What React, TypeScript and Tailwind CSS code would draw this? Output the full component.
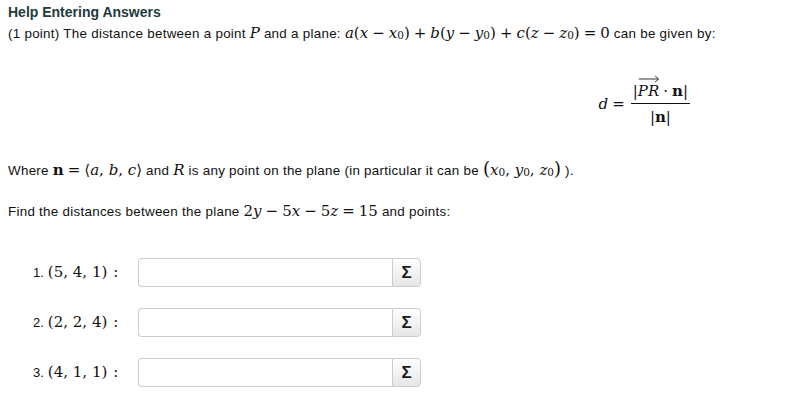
import React from "react";

const mathFont = { fontFamily: '"DejaVu Serif", "Liberation Serif", serif' } as const;

function V({ children }: { children: React.ReactNode }) {
  return <span className="italic">{children}</span>;
}

function M({ children }: { children: React.ReactNode }) {
  return (
    <span className="text-[15px] whitespace-nowrap tracking-normal" style={mathFont}>
      {children}
    </span>
  );
}

function Sub0() {
  return <sub className="text-[10.5px] not-italic relative top-[1px]">0</sub>;
}

function Op({ children }: { children: React.ReactNode }) {
  return <span className="mx-[4px]">{children}</span>;
}

function AnswerRow({ n, point }: { n: number; point: string }) {
  return (
    <div className="flex items-center">
      <div className="w-[130px] pl-[25px] flex items-center gap-[4px]">
        <span className="text-[13px]">{n}.</span>
        <M>
          ({point})<span className="ml-[6px]">:</span>
        </M>
      </div>
      <div className="flex w-[283px] h-[29px]">
        <input
          type="text"
          className="flex-1 min-w-0 h-full border border-[#cccccc] border-r-0 rounded-l-[4px] bg-white outline-none px-2 text-[13px]"
        />
        <button className="w-[29px] h-full border border-[#cccccc] rounded-r-[4px] bg-gradient-to-b from-[#ffffff] to-[#e6e6e6] flex items-center justify-center text-[17px] font-bold text-[#1a1a1a] leading-none">
          Σ
        </button>
      </div>
    </div>
  );
}

export default function App() {
  return (
    <div
      className="w-[790px] h-[405px] bg-white text-[#111] px-[8px] pt-[3px]"
      style={{ fontFamily: '"Liberation Sans", Arial, sans-serif' }}
    >
      <h1 className="text-[14px] font-bold text-[#1e3a3b] leading-[18px]">Help Entering Answers</h1>
      <p className="text-[13.4px] tracking-[0.27px] leading-[22px] mt-[1px]">
        (1 point) The distance between a point{" "}
        <M>
          <V>P</V>
        </M>{" "}
        and a plane:{" "}
        <M>
          <V>a</V>(<V>x</V>
          <Op>−</Op>
          <V>x</V>
          <Sub0 />)<Op>+</Op>
          <V>b</V>(<V>y</V>
          <Op>−</Op>
          <V>y</V>
          <Sub0 />)<Op>+</Op>
          <V>c</V>(<V>z</V>
          <Op>−</Op>
          <V>z</V>
          <Sub0 />)<Op>=</Op>0
        </M>{" "}
        can be given by:
      </p>

      <div className="flex justify-end pr-[92px] mt-[36px]">
        <div className="flex items-center text-[15px]" style={mathFont}>
          <V>d</V>
          <span className="ml-[4px] mr-[6px]">=</span>
          <div className="flex flex-col items-center">
            <div className="px-[2px] flex items-end leading-[20px]">
              <span>|</span>
              <span className="relative inline-block">
                <svg
                  className="absolute left-0 top-[-6px]"
                  width="100%"
                  height="8"
                  viewBox="0 0 30 8"
                  preserveAspectRatio="none"
                >
                  <path d="M1 4 H28" stroke="#111" strokeWidth="1" fill="none" />
                  <path d="M24 1 L29 4 L24 7" stroke="#111" strokeWidth="1" fill="none" />
                </svg>
                <V>PR</V>
              </span>
              <span className="mx-[4px]">·</span>
              <span className="font-bold">n</span>
              <span>|</span>
            </div>
            <div className="w-full h-[1px] bg-[#111] mt-[2px] mb-[3px]" />
            <div className="leading-[20px]">
              |<span className="font-bold">n</span>|
            </div>
          </div>
        </div>
      </div>

      <p className="text-[13.4px] tracking-[0.27px] leading-[22px] mt-[31px]">
        Where{" "}
        <M>
          <span className="font-bold">n</span>
          <Op>=</Op>⟨<V>a</V>, <V>b</V>, <V>c</V>⟩
        </M>{" "}
        and{" "}
        <M>
          <V>R</V>
        </M>{" "}
        is any point on the plane (in particular it can be{" "}
        <M>
          <span className="text-[18px]">(</span>
          <V>x</V>
          <Sub0 />, <V>y</V>
          <Sub0 />, <V>z</V>
          <Sub0 />
          <span className="text-[18px]">)</span>
        </M>{" "}
        ).
      </p>

      <p className="text-[13.4px] tracking-[0.27px] leading-[22px] mt-[18px]">
        Find the distances between the plane{" "}
        <M>
          2<V>y</V>
          <Op>−</Op>5<V>x</V>
          <Op>−</Op>5<V>z</V>
          <Op>=</Op>15
        </M>{" "}
        and points:
      </p>

      <div className="flex flex-col gap-[21px] mt-[35px]">
        <AnswerRow n={1} point="5, 4, 1" />
        <AnswerRow n={2} point="2, 2, 4" />
        <AnswerRow n={3} point="4, 1, 1" />
      </div>
    </div>
  );
}
